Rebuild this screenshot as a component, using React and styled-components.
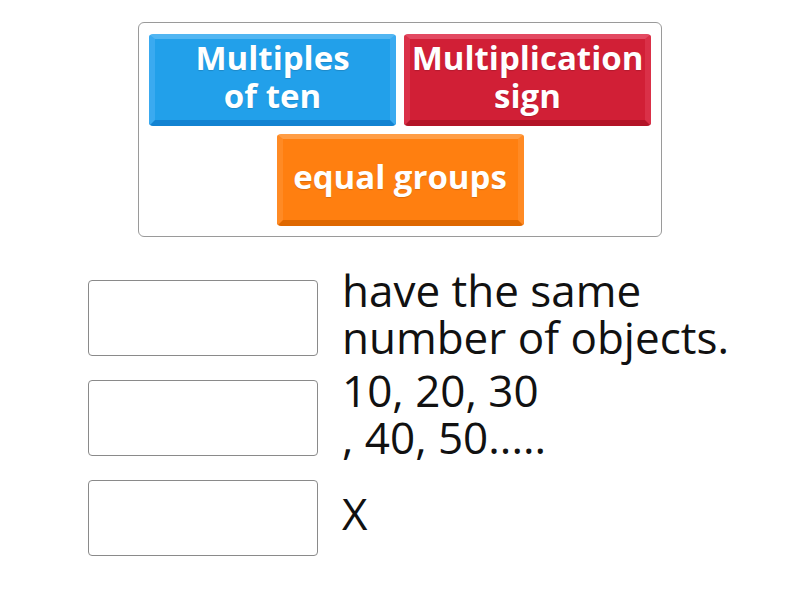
import React from "react";
import styled, { createGlobalStyle } from "styled-components";

const Global = createGlobalStyle`
  html, body { margin: 0; padding: 0; background: #fff; }
  body { font-family: "Open Sans", "Noto Sans", sans-serif; color: #111; }
`;

const Board = styled.div`
  width: 800px;
  height: 600px;
  display: flex;
  flex-direction: column;
  align-items: center;
  box-sizing: border-box;
  padding-top: 22px;
`;

const Pool = styled.div`
  width: 524px;
  box-sizing: border-box;
  border: 1px solid #9a9a9a;
  border-radius: 6px;
  padding: 11px 10px 10px;
  display: flex;
  flex-wrap: wrap;
  justify-content: center;
  gap: 8px;
`;

const palettes = {
  blue: { face: "#22a0ea", top: "#52b6f2", side: "#3aaaf0", bottom: "#1283d2" },
  red: { face: "#d11f36", top: "#e34a62", side: "#da3048", bottom: "#b31427" },
  orange: { face: "#ff7f10", top: "#ff9d45", side: "#ff8a24", bottom: "#df6800" },
};

const Tile = styled.div`
  width: 247px;
  height: 92px;
  box-sizing: border-box;
  border-radius: 4px;
  border-style: solid;
  border-width: 5px 6px 6px 6px;
  border-color: ${(p) => palettes[p.$c].top} ${(p) => palettes[p.$c].side}
    ${(p) => palettes[p.$c].bottom} ${(p) => palettes[p.$c].side};
  background: ${(p) => palettes[p.$c].face};
  display: flex;
  align-items: center;
  justify-content: center;
  text-align: center;
  color: #fff;
  font-weight: 700;
  font-size: 33px;
  line-height: 38px;
  padding-bottom: 6px;
  text-shadow: 0 1px 1px rgba(0, 0, 0, 0.15);
`;

const List = styled.div`
  width: 624px;
  margin-top: 43px;
  display: flex;
  flex-direction: column;
  gap: 24px;
`;

const Row = styled.div`
  height: 76px;
  display: flex;
  align-items: center;
  gap: 24px;
`;

const Slot = styled.div`
  flex: 0 0 230px;
  height: 76px;
  box-sizing: border-box;
  border: 1px solid #8a8a8a;
  border-radius: 4px;
  background: #fff;
`;

const Clue = styled.div`
  font-size: 44px;
  line-height: 47px;
  color: #111;
  white-space: nowrap;
  padding-bottom: 9px;
`;

const tiles = [
  { c: "blue", lines: ["Multiples", "of ten"] },
  { c: "red", lines: ["Multiplication", "sign"] },
  { c: "orange", lines: ["equal groups"] },
];

const clues = [
  ["have the same", "number of objects."],
  ["10, 20, 30", ", 40, 50....."],
  ["X"],
];

export default function App() {
  return (
    <>
      <Global />
      <Board>
        <Pool>
          {tiles.map((t, i) => (
            <Tile key={i} $c={t.c}>
              <div>
                {t.lines.map((l, j) => (
                  <div key={j}>{l}</div>
                ))}
              </div>
            </Tile>
          ))}
        </Pool>
        <List>
          {clues.map((lines, i) => (
            <Row key={i}>
              <Slot />
              <Clue>
                {lines.map((l, j) => (
                  <div key={j}>{l}</div>
                ))}
              </Clue>
            </Row>
          ))}
        </List>
      </Board>
    </>
  );
}
